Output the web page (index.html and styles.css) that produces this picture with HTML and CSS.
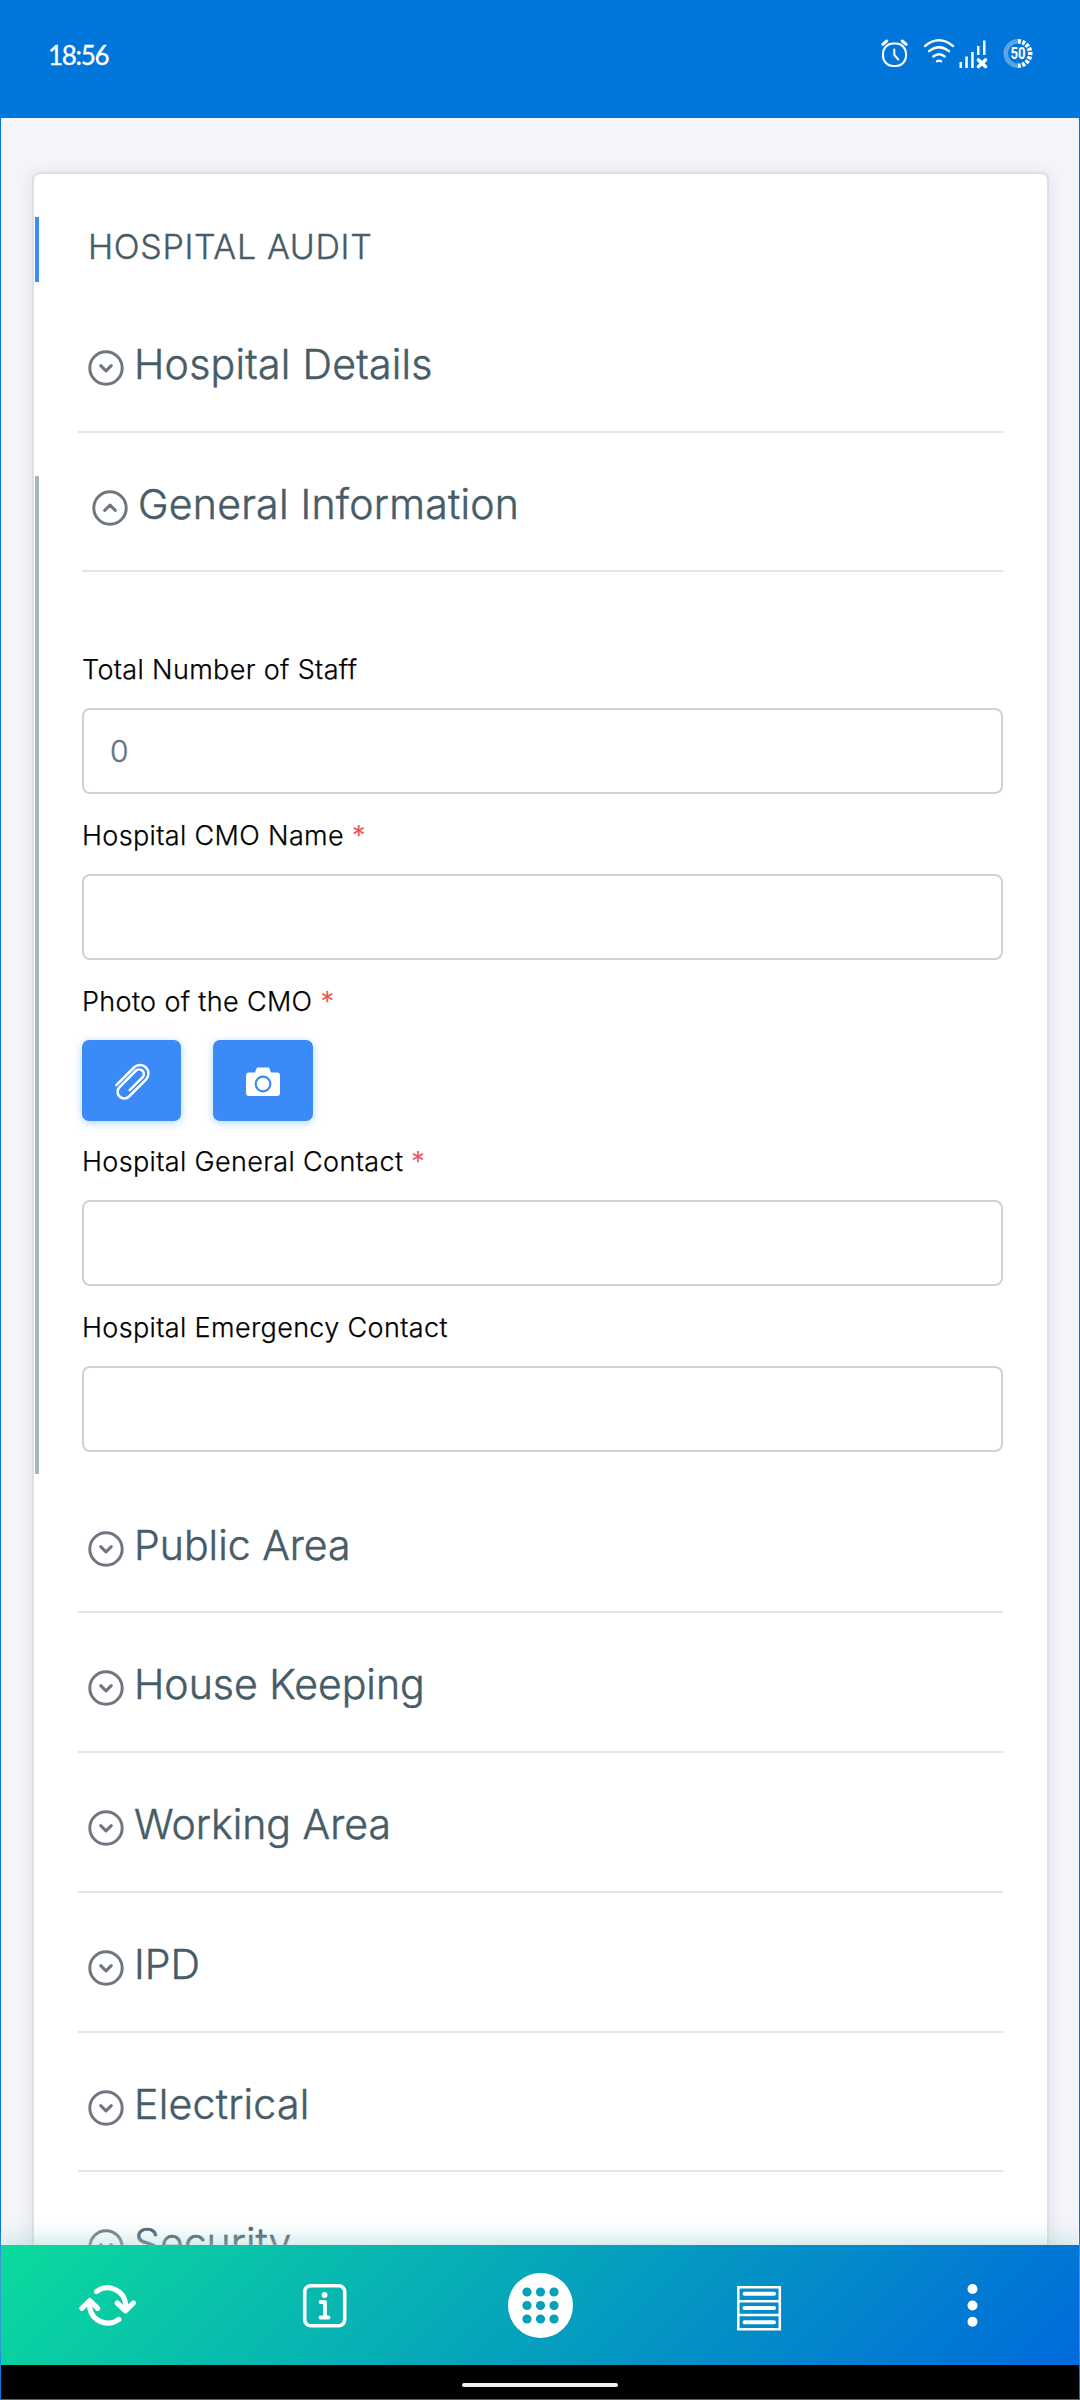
FILE: index.html
```
<!DOCTYPE html>
<html lang="en">
<head>
<meta charset="utf-8">
<title>Hospital Audit</title>
<link rel="stylesheet" href="styles.css">
</head>
<body>
<svg class="defs" width="0" height="0">
  <defs>
    <symbol id="down" viewBox="0 0 36 36"><circle cx="18" cy="18" r="16.2"/><path d="M12.700 15.600l5.300 5.300 5.300-5.300"/></symbol>
    <symbol id="up" viewBox="0 0 36 36"><circle cx="18" cy="18" r="16.2"/><path d="M12.700 20.400l5.300-5.300 5.300 5.300"/></symbol>
  </defs>
</svg>
<div class="screen">
  <header class="status">
    <span class="time">18:56</span>
    <svg class="status-icons" width="156" height="36" viewBox="878 36 156 36">
      <g fill="none" stroke="#fff" stroke-linecap="round">
        <g stroke-width="2"><rect x="883" y="43.5" width="23" height="22.5" rx="10"/><path d="M894.3 49.5v5.5l4 4.5"/><path d="M882.8 44.3l4-3.3M902.2 41l4 3.3" stroke-width="3"/></g>
        <g stroke-width="2.3"><path d="M925 46q14-11.500 28 0M929 51.200q10-8 20 0M933.300 56.500q5.700-4.500 11.400 0M937 61.300q2-1.300 4 0"/></g>
      </g>
      <g fill="#fff"><rect x="959.500" y="62" width="2.500" height="6"/><rect x="965.300" y="56.500" width="2.500" height="11.500"/><rect x="971.200" y="52" width="2.500" height="16"/><rect x="977" y="46" width="2.500" height="9"/><rect x="983" y="40.500" width="2.500" height="14.500"/></g>
      <path d="M978.500 60l7 6.500M985.500 60l-7 6.500" stroke="#fff" stroke-width="3.600" stroke-linecap="round"/>
      <g fill="none" stroke-width="4.600"><path d="M1018 41.300a12.200 12.200 0 0 0 0 24.400" stroke="#5aa5e8"/><path d="M1018 41.300a12.200 12.200 0 0 1 0 24.400" stroke="#fff" stroke-dasharray="3 1.400"/></g>
      <text class="battery" x="1018" y="59" textLength="15" lengthAdjust="spacingAndGlyphs" text-anchor="middle">50</text>
    </svg>
  </header>

  <main class="content">
    <article class="card">
      <h1 class="card-title">HOSPITAL AUDIT</h1>
      <section class="row loose"><svg class="chev"><use href="#down"/></svg><span>Hospital Details</span></section>

      <section class="open">
        <div class="row inner loose"><svg class="chev"><use href="#up"/></svg><span>General Information</span></div>
        <div class="fields">
          <label class="label" for="staff">Total Number of Staff</label>
          <input class="input" id="staff" placeholder="0">
          <label class="label" for="cmo">Hospital CMO Name <i class="req">*</i></label>
          <input class="input" id="cmo">
          <div class="label">Photo of the CMO <i class="req">*</i></div>
          <div class="buttons">
            <button class="btn" aria-label="Attach file"><svg width="38" height="38" viewBox="-18.500 -19 38 38"><path transform="rotate(45)" d="M-8.500 13V-12A8.500 8.500 0 0 1 8.500-12V12A6.700 6.700 0 0 1-4.900 12V-11A4.700 4.700 0 0 1 4.500-11V7" fill="none" stroke="#fff" stroke-width="2.500" stroke-linecap="round"/></svg></button>
            <button class="btn wide" aria-label="Take photo"><svg width="36" height="30" viewBox="0 0 36 30"><path d="M4 5.500h6l2-5h12l2 5h6a3 3 0 0 1 3 3V26a3 3 0 0 1-3 3H4a3 3 0 0 1-3-3V8.500a3 3 0 0 1 3-3z" fill="#fff"/><circle cx="18" cy="17" r="7.300" fill="none" stroke="#3a8bf8" stroke-width="2.200"/></svg></button>
          </div>
          <label class="label" for="general">Hospital General Contact <i class="req">*</i></label>
          <input class="input" id="general">
          <label class="label" for="emergency">Hospital Emergency Contact</label>
          <input class="input" id="emergency">
        </div>
      </section>

      <section class="row"><svg class="chev"><use href="#down"/></svg><span>Public Area</span></section>
      <section class="row"><svg class="chev"><use href="#down"/></svg><span>House Keeping</span></section>
      <section class="row"><svg class="chev"><use href="#down"/></svg><span>Working Area</span></section>
      <section class="row"><svg class="chev"><use href="#down"/></svg><span>IPD</span></section>
      <section class="row loose"><svg class="chev"><use href="#down"/></svg><span>Electrical</span></section>
      <section class="row"><svg class="chev"><use href="#down"/></svg><span>Security</span></section>
    </article>
  </main>

  <nav class="nav">
    <svg width="60" height="66" viewBox="78 2272 60 66"><g fill="none" stroke="#fff" stroke-width="5.200" stroke-linecap="round" stroke-linejoin="round"><path d="M96.500 2291.500A18.400 18.400 0 0 1 125.700 2304V2310M117.200 2303l8.200 7.800 8-7.800"/><path d="M118.800 2319.500A18.400 18.400 0 0 1 89.800 2308V2302M81.800 2308.300l8-7.800 7.900 7.800"/></g></svg>
    <svg width="46" height="66" viewBox="301 2272 46 66"><rect x="304.700" y="2285.700" width="40" height="40" rx="6" fill="none" stroke="#fff" stroke-width="3.600"/><circle cx="324.600" cy="2295" r="2.900" fill="#fff"/><path d="M320.500 2302h4.500v15.500M320.500 2317.500h8" fill="none" stroke="#fff" stroke-width="3.800" stroke-linecap="round" stroke-linejoin="round"/></svg>
    <svg width="66" height="66" viewBox="506.500 2272 66 66"><circle cx="540" cy="2305.500" r="32.500" fill="#fff"/><g fill="#06a0ba"><circle cx="526.500" cy="2292" r="4.600"/><circle cx="540" cy="2292" r="4.600"/><circle cx="553.500" cy="2292" r="4.600"/><circle cx="526.500" cy="2305.500" r="4.600"/><circle cx="540" cy="2305.500" r="4.600"/><circle cx="553.500" cy="2305.500" r="4.600"/><circle cx="526.500" cy="2319" r="4.600"/><circle cx="540" cy="2319" r="4.600"/><circle cx="553.500" cy="2319" r="4.600"/></g></svg>
    <svg width="52" height="66" viewBox="730 2272 52 66"><g fill="none" stroke="#fff" stroke-width="2.500"><path d="M738.300 2287.300h41.500v42h-41.500zM738.300 2301.200h41.500M738.300 2315h41.500"/><path d="M744.500 2293.700h29.500M744.500 2308h29.500M744.500 2322.300h29.500" stroke-width="4" stroke-linecap="round"/></g></svg>
    <svg width="12" height="66" viewBox="966 2272 12 66" fill="#fff"><circle cx="972.500" cy="2289" r="5"/><circle cx="972.500" cy="2305.500" r="5"/><circle cx="972.500" cy="2321.800" r="5"/></svg>
  </nav>
  <footer class="gesture"><span class="pill"></span></footer>
</div>
</body>
</html>
```
FILE: styles.css
```
* { box-sizing: border-box; }
body { margin: 0; font-family: Inter, "Liberation Sans", sans-serif; font-weight: 300; }
.defs { display: block; }
.screen {
  width: 1080px; height: 2400px; overflow: hidden;
  display: flex; flex-direction: column;
  background: #0176da;
  padding: 0 1px 1px;
}
.status {
  flex: none; height: 118px;
  display: flex; justify-content: space-between; align-items: flex-start;
  padding: 36px 45px 0 47px;
}
.time { color: #fff; font: 400 26px/38px Lato, sans-serif; letter-spacing: -1.3px; -webkit-text-stroke: .3px #fff; }
.battery { font: 700 16px Roboto, sans-serif; fill: #fff; }
.content { flex: 1; min-height: 0; overflow: hidden; background: #f4f5fa; padding: 54px 30px 0 31px; }
.card {
  height: 2300px; background: #fff; border: 2px solid #dedfe0; border-radius: 8px;
  box-shadow: 0 2px 16px rgba(40, 50, 70, .1);
  padding: 43px 0 0 1px;
}
.card-title {
  margin: 0 0 11px; height: 65px; padding-left: 49px;
  border-left: 4px solid #3a8bf8;
  font-weight: 300; font-size: 34px; line-height: 59px; color: #475c67;
  letter-spacing: .65px; -webkit-text-stroke: .4px #475c67;
}
.row {
  height: 139.8px; margin: 0 44px 0 43px; padding: 56px 0 0 10px;
  display: flex; align-items: flex-start; gap: 10px;
  border-bottom: 2px solid #e5e5e6;
  color: #475c67; font-size: 41px; line-height: 50px;
}
.chev { width: 36px; height: 36px; margin-top: 1px; fill: none; stroke: #6e767f; stroke-width: 3px; stroke-linecap: round; stroke-linejoin: round; }
.row span { margin-top: -10px; -webkit-text-stroke: .5px #475c67; }
.loose { letter-spacing: .25px; }
.open { margin-top: 43px; height: 998px; border-left: 4px solid #a3b5bd; }
.open + .row { height: 139.5px; }
.inner { height: 96px; margin-left: 43px; padding-top: 13px; }
.fields { padding: 70px 44px 0 43px; }
.label { display: block; height: 66px; line-height: 55px; font-size: 27px; color: #000; letter-spacing: .35px; -webkit-text-stroke: .25px; }
.req { color: #f0504f; font-style: normal; }
.input {
  display: block; width: 921px; height: 86px; margin-bottom: 14px;
  border: 2px solid #cdd2da; border-radius: 8px; background: #fff;
  padding: 0 26px; font: 300 30px Inter, sans-serif; color: #475c67;
}
.input::placeholder { color: #64757e; opacity: 1; -webkit-text-stroke: .4px #64757e; }
.buttons { display: flex; gap: 32px; height: 94px; }
.btn {
  width: 99px; height: 81px; padding: 3px 0 0; border: 0; border-radius: 7px;
  background: #3a8bf8; box-shadow: 0 2px 9px rgba(0, 125, 240, .3);
  display: flex; align-items: center; justify-content: center;
}
.wide { width: 100px; }
.nav {
  flex: none; position: relative; height: 120px;
  background: linear-gradient(135deg, #0bdb9c, #006adc);
  box-shadow: 0 -2px 24px rgba(0, 140, 140, .27), 0 -4px 22px rgba(255, 255, 255, .55);
  display: grid; grid-template-columns: repeat(5, 216px);
  justify-content: center; justify-items: center; align-items: center;
}
.gesture { position: relative; flex: none; height: 34px; background: #000; display: flex; justify-content: center; padding-top: 18px; }
.pill { width: 156px; height: 4px; border-radius: 2px; background: #f2f2f0; }
```
